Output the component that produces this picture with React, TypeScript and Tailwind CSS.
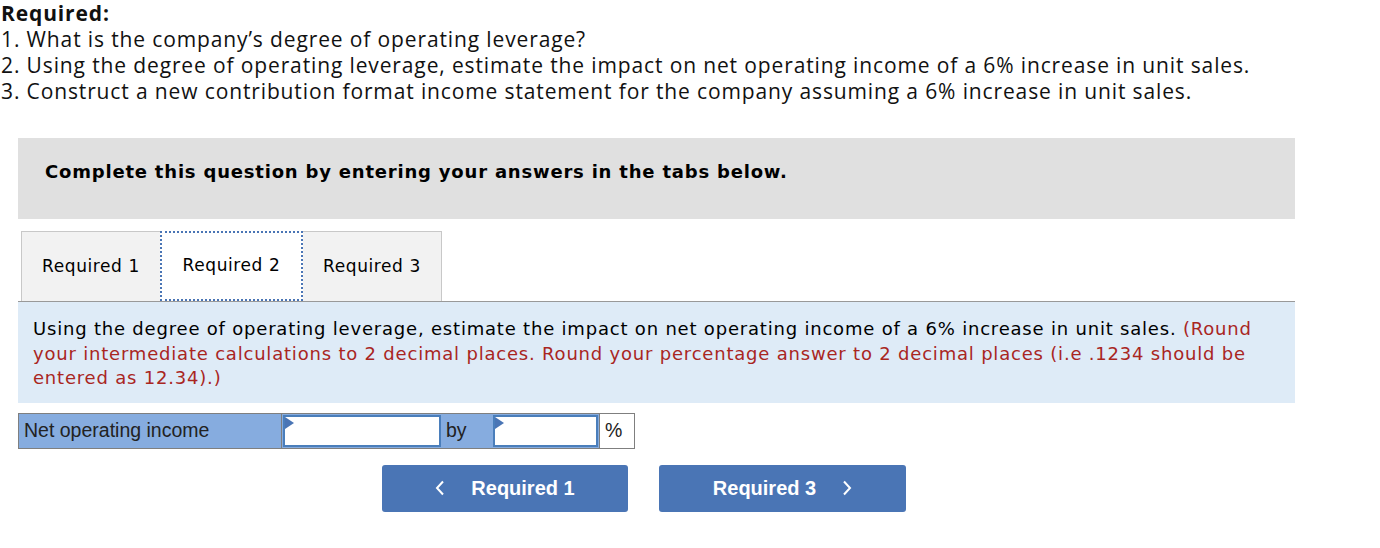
const tabs = ["Required 1", "Required 2", "Required 3"];

const Flag = () => (
  <span className="absolute left-0 top-0 w-0 h-0 border-t-[6px] border-b-[6px] border-l-[9px] border-t-transparent border-b-transparent border-l-[#4a75b5]" />
);

const Chevron = ({ dir }: { dir: "left" | "right" }) => (
  <svg width="10" height="16" viewBox="0 0 10 16" fill="none" stroke="currentColor" strokeWidth="2">
    {dir === "left" ? <path d="M8 1.5 L2 8 L8 14.5" /> : <path d="M2 1.5 L8 8 L2 14.5" />}
  </svg>
);

const App = () => {
  const active = 1;
  return (
    <div className="w-[1380px] h-[548px] bg-white text-black overflow-hidden">
      {/* Question text */}
      <div className="pl-[1px] font-['Open_Sans','Lato',sans-serif] text-[21px] leading-[26px] tracking-[0.87px] text-[#111]">
        <p className="font-bold">Required:</p>
        <p>1. What is the company’s degree of operating leverage?</p>
        <p>
          2. Using the degree of operating leverage, estimate the impact on net operating income of a 6% increase in unit sales.
        </p>
        <p>3. Construct a new contribution format income statement for the company assuming a 6% increase in unit sales.</p>
      </div>

      <div className="ml-[18px] w-[1277px] mt-[34px]">
        {/* Instruction box */}
        <div className="h-[81px] bg-[#e0e0e0] pt-[22px] pl-[27px] font-['DejaVu_Sans',Verdana,sans-serif] font-bold text-[18px] leading-[24px] tracking-[0.8px]">
          Complete this question by entering your answers in the tabs below.
        </div>

        {/* Tabs */}
        <div className="mt-[12px] pl-[3px] flex border-b border-[#999]">
          {tabs.map((tab, index) => (
            <div
              key={tab}
              className={`h-[70px] flex items-center justify-center font-['DejaVu_Sans',Verdana,sans-serif] text-[17px] tracking-[0.6px] ${
                index === active
                  ? "w-[143px] bg-white border-2 border-dotted border-[#4a75b5] -mb-[1px] relative"
                  : index === 0
                  ? "w-[139px] bg-[#f2f2f2] border-t border-l border-[#c8c8c8]"
                  : "w-[139px] bg-[#f2f2f2] border-t border-r border-[#c8c8c8]"
              }`}
            >
              {tab}
            </div>
          ))}
        </div>

        {/* Part prompt */}
        <div className="bg-[#deebf7] pt-[15px] pb-[12px] pl-[15px] pr-[28px] font-['DejaVu_Sans',Verdana,sans-serif] text-[18px] leading-[24.5px] tracking-[0.8px]">
          Using the degree of operating leverage, estimate the impact on net operating income of a 6% increase in unit sales.{" "}
          <span className="text-[#a9261f]">
            (Round your intermediate calculations to 2 decimal places. Round your percentage answer to 2 decimal places (i.e .1234 should be entered as 12.34).)
          </span>
        </div>

        {/* Answer row */}
        <div className="mt-[10px] flex w-[617px] h-[36px] border border-[#7f7f7f] font-['Liberation_Sans',Arial,sans-serif] text-[19.5px] text-[#222]">
          <div className="w-[263px] bg-[#86acdf] flex items-center pl-[5px] border-r border-[#7f7f7f]">
            Net operating income
          </div>
          <div className="w-[160px] bg-[#86acdf] p-[1px]">
            <div className="relative h-full bg-white border-2 border-[#4a7ebb]">
              <Flag />
            </div>
          </div>
          <div className="w-[50px] bg-[#86acdf] flex items-center pl-[4px]">by</div>
          <div className="w-[107px] bg-[#86acdf] p-[1px]">
            <div className="relative h-full bg-white border-2 border-[#4a7ebb]">
              <Flag />
            </div>
          </div>
          <div className="flex-1 bg-white flex items-center pl-[5px] border-l border-[#7f7f7f]">%</div>
        </div>
      </div>

      {/* Navigation */}
      <div className="mt-[16px] ml-[382px] flex gap-[31px] font-['Liberation_Sans',Arial,sans-serif] font-bold text-[20px] text-white">
        <button className="w-[246px] h-[47px] bg-[#4a75b5] rounded-[3px] flex items-center justify-center gap-[26px]">
          <Chevron dir="left" />
          <span>Required 1</span>
        </button>
        <button className="w-[247px] h-[47px] bg-[#4a75b5] rounded-[3px] flex items-center justify-center gap-[26px]">
          <span>Required 3</span>
          <Chevron dir="right" />
        </button>
      </div>
    </div>
  );
};

export default App;
